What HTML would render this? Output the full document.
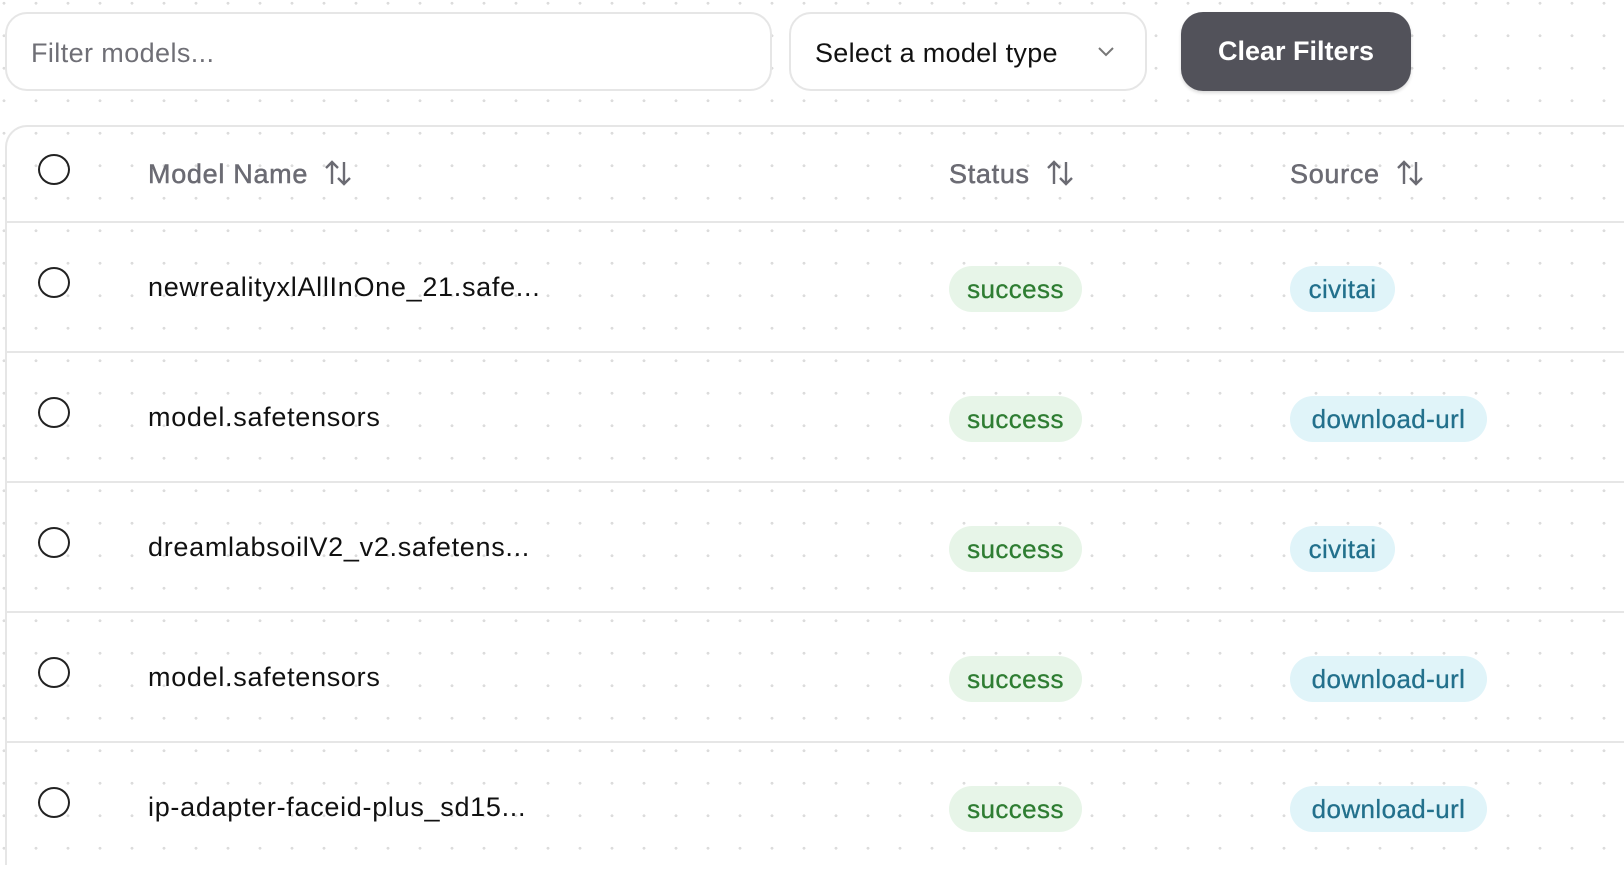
<!DOCTYPE html>
<html style="overflow:hidden;width:1624px;height:870px"><head><meta charset="utf-8"><style>
*{box-sizing:border-box;margin:0;padding:0}
body{width:1624px;height:870px;overflow:hidden;background:#fff;font-family:"Liberation Sans",sans-serif;
background-image:radial-gradient(circle,#dcdcdc 1.3px,transparent 1.6px);background-size:32px 32.5px;background-position:-12px -13px;position:relative}
.box{position:absolute;border:2px solid #e6e6e6;border-radius:22px;background:#fff}
.inp{left:5px;top:12px;width:767px;height:79px;font-size:27px;color:#6f6f76;padding:24px 0 0 24px;letter-spacing:0.4px}
.sel{left:789px;top:12px;width:358px;height:79px;font-size:27px;color:#111;padding:24px 0 0 24px;letter-spacing:0.3px}
.sel svg{position:absolute;left:305px;top:31px}
.btn{position:absolute;left:1181px;top:12px;width:230px;height:79px;background:#52525a;border-radius:22px;color:#fff;font-weight:bold;font-size:27px;text-align:center;line-height:79px;box-shadow:0 2px 3px rgba(0,0,0,.15)}
.table{position:absolute;left:5px;top:125px;width:1660px;height:740px;border:2px solid #e6e6e6;border-bottom:none;border-radius:22px 22px 0 0}
.hline{position:absolute;left:5px;width:1620px;height:2px;background:#e6e6e6}
.cb{position:absolute;left:38px;width:32px;height:31px;border:2px solid #222;border-radius:50%}
.t{position:absolute;font-size:27px;line-height:32px;white-space:nowrap;letter-spacing:0.7px;color:#111}
.h{color:#6b6b73;-webkit-text-stroke:0.5px #6b6b73}
.h svg{vertical-align:-4px;margin-left:16px}
.badge{position:absolute;height:46px;border-radius:23px;font-size:26px;line-height:46px;text-align:center;letter-spacing:0.4px;-webkit-text-stroke:0.3px currentColor}
.g{background:#e7f5e8;color:#2e7d32;width:133px;left:949px}
.b{background:#e0f4f9;color:#22708c;left:1290px}
</style></head><body>
<div class="box inp">Filter models...</div>
<div class="box sel">Select a model type<svg width="20" height="14" viewBox="0 0 20 14"><path d="M3 3l7 7 7-7" fill="none" stroke="#777" stroke-width="2"/></svg></div>
<div class="btn">Clear Filters</div>
<div class="table"></div>
<div class="hline" style="top:221px"></div>
<div class="hline" style="top:351px"></div>
<div class="hline" style="top:481px"></div>
<div class="hline" style="top:611px"></div>
<div class="hline" style="top:741px"></div>

<div class="cb" style="top:154px"></div>
<div class="t h" style="left:148px;top:158px">Model Name<svg width="28" height="28" viewBox="0 0 28 28"><path d="M8 25V3M2 9l6-6 6 6M20 3v22M14 19l6 6 6-6" fill="none" stroke="#6b6b73" stroke-width="2.4"/></svg></div>
<div class="t h" style="left:949px;top:158px">Status<svg width="28" height="28" viewBox="0 0 28 28"><path d="M8 25V3M2 9l6-6 6 6M20 3v22M14 19l6 6 6-6" fill="none" stroke="#6b6b73" stroke-width="2.4"/></svg></div>
<div class="t h" style="left:1290px;top:158px">Source<svg width="28" height="28" viewBox="0 0 28 28"><path d="M8 25V3M2 9l6-6 6 6M20 3v22M14 19l6 6 6-6" fill="none" stroke="#6b6b73" stroke-width="2.4"/></svg></div>

<div class="cb" style="top:267px"></div>
<div class="t" style="left:148px;top:271px">newrealityxlAllInOne_21.safe...</div>
<div class="badge g" style="top:266px">success</div>
<div class="badge b" style="top:266px;width:105px">civitai</div>

<div class="cb" style="top:397px"></div>
<div class="t" style="left:148px;top:401px">model.safetensors</div>
<div class="badge g" style="top:396px">success</div>
<div class="badge b" style="top:396px;width:197px">download-url</div>

<div class="cb" style="top:527px"></div>
<div class="t" style="left:148px;top:531px">dreamlabsoilV2_v2.safetens...</div>
<div class="badge g" style="top:526px">success</div>
<div class="badge b" style="top:526px;width:105px">civitai</div>

<div class="cb" style="top:657px"></div>
<div class="t" style="left:148px;top:661px">model.safetensors</div>
<div class="badge g" style="top:656px">success</div>
<div class="badge b" style="top:656px;width:197px">download-url</div>

<div class="cb" style="top:787px"></div>
<div class="t" style="left:148px;top:791px">ip-adapter-faceid-plus_sd15...</div>
<div class="badge g" style="top:786px">success</div>
<div class="badge b" style="top:786px;width:197px">download-url</div>
</body></html>
